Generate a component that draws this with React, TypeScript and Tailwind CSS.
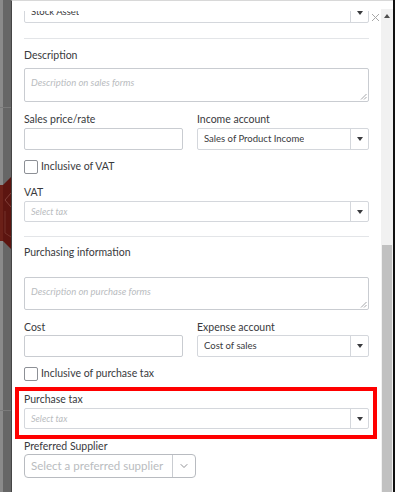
import { ChevronDown } from 'lucide-react'

const label = "block h-[14px] leading-[14px] text-[10.5px] text-[#393a3d]"

function Caret() {
  return (
    <svg width="6" height="4" viewBox="0 0 6 4" className="block">
      <path d="M0 0 L6 0 L3 4 Z" fill="#393a3d" />
    </svg>
  )
}

function Select({ value, placeholder, h = 'h-[21px]' }: { value?: string; placeholder?: string; h?: string }) {
  return (
    <div className={`flex ${h} border border-[#d4d7dc] rounded-[2px] bg-white`}>
      <div className="flex-1 flex items-center px-[6px] min-w-0">
        {value ? (
          <span className="text-[9.5px] text-[#393a3d] truncate">{value}</span>
        ) : (
          <span className="text-[9px] italic text-[#b9bcc0]">{placeholder}</span>
        )}
      </div>
      <div className="w-[18px] border-l border-[#d4d7dc] flex items-center justify-center">
        <Caret />
      </div>
    </div>
  )
}

function TextArea({ placeholder, h }: { placeholder: string; h: string }) {
  return (
    <div className={`relative ${h} border border-[#c9ccd1] rounded-[2px] bg-white px-[6px] pt-[8px]`}>
      <span className="block text-[9.5px] italic text-[#b9bcc0] leading-[12px]">{placeholder}</span>
      <svg width="7" height="7" viewBox="0 0 7 7" className="absolute right-[1px] bottom-[1px]">
        <path d="M6.5 1 L1 6.5 M6.5 4 L4 6.5" stroke="#8d9096" strokeWidth="0.8" />
      </svg>
    </div>
  )
}

function Check({ text }: { text: string }) {
  return (
    <div className="flex items-center h-[14px] gap-[3px]">
      <div className="w-[14px] h-[14px] border border-[#8d9096] rounded-[2px] bg-white" />
      <span className="text-[10.5px] text-[#393a3d]">{text}</span>
    </div>
  )
}

export default function App() {
  return (
    <div className="w-[406px] h-[492px] flex overflow-hidden bg-white font-['Lato','Open_Sans',sans-serif]">
      {/* dimmed page behind the drawer */}
      <div className="relative w-[11px] h-full flex">
        <div className="w-[3px] h-full bg-[#8a8a8a]" />
        <div className="flex-1 h-full bg-[#666666]" />
        <div className="absolute left-0 right-0 top-[107px] h-px bg-[#7a7a7a]" />
        <div className="absolute left-0 right-0 top-[410px] h-px bg-[#7a7a7a]" />
        <svg width="11" height="80" viewBox="0 0 11 80" className="absolute left-0 top-[175px]">
          <path d="M11 2 L3 10 L3 66 L11 74 Z" fill="#5c1510" />
          <path d="M3 10 L0 10 L0 66 L3 66 Z" fill="#6b2018" />
          <path d="M11 18 L5 25 L11 32" stroke="#8a4a42" strokeWidth="0.8" fill="none" />
          <path d="M5 36 L5 58 L11 62" stroke="#7a3a32" strokeWidth="0.8" fill="none" />
        </svg>
      </div>

      {/* drawer panel */}
      <div className="relative w-[370px] h-full border-l border-[#454545] border-t border-t-[#d8d8d8] flex flex-col">
        <div className="h-[10px]" />
        <svg width="9" height="9" viewBox="0 0 9 9" className="absolute left-[359px] top-[12px]">
          <path d="M1 1 L8 8 M8 1 L1 8" stroke="#a8a8a8" strokeWidth="1" />
        </svg>
        <div className="flex-1 overflow-hidden px-[12px]">
          <div className="mt-[-9px]">
            <Select value="Stock Asset" />
          </div>
          <div className="mt-[15px] h-px bg-[#e3e5e8]" />

          <span className={`${label} mt-[9px]`}>Description</span>
          <div className="mt-[6px]">
            <TextArea placeholder="Description on sales forms" h="h-[34px]" />
          </div>

          <div className="mt-[10px] flex gap-[14px]">
            <div className="w-[159px]">
              <span className={label}>Sales price/rate</span>
              <div className="mt-[2px] h-[22px] border border-[#c9ccd1] rounded-[2px]" />
            </div>
            <div className="flex-1">
              <span className={label}>Income account</span>
              <div className="mt-[2px]">
                <Select value="Sales of Product Income" h="h-[22px]" />
              </div>
            </div>
          </div>

          <div className="mt-[10px]">
            <Check text="Inclusive of VAT" />
          </div>

          <span className={`${label} mt-[11px]`}>VAT</span>
          <div className="mt-[2px]">
            <Select placeholder="Select tax" />
          </div>

          <div className="mt-[14px] h-px bg-[#e3e5e8]" />
          <span className={`${label} mt-[8px]`}>Purchasing information</span>
          <div className="mt-[18px]">
            <TextArea placeholder="Description on purchase forms" h="h-[33px]" />
          </div>

          <div className="mt-[10px] flex gap-[14px]">
            <div className="w-[159px]">
              <span className={label}>Cost</span>
              <div className="mt-[1px] h-[22px] border border-[#c9ccd1] rounded-[2px]" />
            </div>
            <div className="flex-1">
              <span className={label}>Expense account</span>
              <div className="mt-[1px]">
                <Select value="Cost of sales" h="h-[22px]" />
              </div>
            </div>
          </div>

          <div className="mt-[10px]">
            <Check text="Inclusive of purchase tax" />
          </div>

          <div className="mt-[6px] ml-[-9px] mr-[-8px] border-4 border-[#ff0000] pl-[5px] pr-[4px] pt-[1px] pb-[6px]">
            <span className={label}>Purchase tax</span>
            <div className="mt-[2px]">
              <Select placeholder="Select tax" />
            </div>
          </div>

          <span className={label}>Preferred Supplier</span>
          <div className="mt-[1px] w-[172px] h-[24px] flex border border-[#b8bbc0] rounded-[4px]">
            <div className="flex-1 min-w-0 overflow-hidden flex items-center px-[6px]">
              <span className="text-[11.5px] text-[#b9bcc0] whitespace-nowrap">Select a preferred supplier</span>
            </div>
            <div className="w-[23px] shrink-0 border-l border-[#c9ccd1] flex items-center justify-center">
              <ChevronDown size={12} strokeWidth={1.5} color="#6b6c72" />
            </div>
          </div>
        </div>
      </div>

      {/* scrollbar */}
      <div className="w-[12px] h-full flex flex-col border-t border-t-[#d8d8d8]">
        <div className="h-[8px] bg-white" />
        <div className="flex-1 bg-[#f1f1f1] flex flex-col">
          <div className="h-[14px] flex items-center justify-center">
            <svg width="6" height="4" viewBox="0 0 6 4">
              <path d="M0 4 L6 4 L3 0 Z" fill="#505050" />
            </svg>
          </div>
          <div className="h-[222px]" />
          <div className="flex-1 mx-[1px] bg-[#c1c1c1]" />
        </div>
      </div>
      <div className="w-[2px] h-full bg-[#111111]" />
      <div className="flex-1 h-full bg-white" />
    </div>
  )
}
